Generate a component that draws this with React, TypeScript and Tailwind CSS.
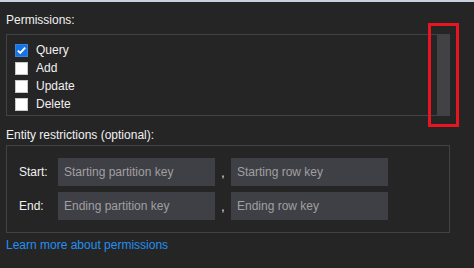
import * as React from 'react'

const PERMISSIONS = [
  { label: 'Query', checked: true },
  { label: 'Add', checked: false },
  { label: 'Update', checked: false },
  { label: 'Delete', checked: false },
]

function Check({ checked }: { checked: boolean }) {
  if (checked) {
    return (
      <span className="flex h-[13px] w-[13px] items-center justify-center border border-[#3f7fd8] bg-[#1473e6]">
        <svg viewBox="0 0 11 11" className="h-[11px] w-[11px]" aria-hidden="true">
          <path d="M1.8 5.6 L4.3 8 L9.2 2.6" fill="none" stroke="#ffffff" strokeWidth="1.9" />
        </svg>
      </span>
    )
  }
  return <span className="h-[13px] w-[13px] border border-[#c8c8c8] bg-white" />
}

function KeyInput({ placeholder }: { placeholder: string }) {
  return (
    <input
      placeholder={placeholder}
      className="h-[28px] w-[157px] bg-[#3f3f46] px-[6px] text-[12px] text-[#e0e0e0] outline-none placeholder:text-[#a0a0a0]"
    />
  )
}

export default function App() {
  return (
    <div
      className="relative h-[268px] w-[474px] overflow-hidden bg-[#252526] text-[12px] text-[#f1f1f1]"
      style={{ fontFamily: '"Liberation Sans", Arial, sans-serif' }}
    >
      <div className="h-[2px] bg-[#c9d1e0]" />
      <div className="px-[6px]">
        <div className="pb-[6px] pt-[10px] leading-4">Permissions:</div>
        <div className="flex h-[82px] w-[444px] border border-r-0 border-[#434346]">
          <div className="flex flex-1 flex-col pl-[8px] pt-[6px]">
            {PERMISSIONS.map((p) => (
              <label key={p.label} className="flex h-[18px] items-center gap-[8px] leading-4">
                <Check checked={p.checked} />
                <span>{p.label}</span>
              </label>
            ))}
          </div>
          <div className="-my-px w-[13px] bg-[#424245]" />
        </div>

        <div className="pb-[2px] pt-[11px] leading-4">Entity restrictions (optional):</div>
        <div className="flex w-[444px] flex-col gap-[6px] border border-[#434346] px-[12px] py-[12px]">
          <div className="flex items-center">
            <span className="w-[39px]">Start:</span>
            <KeyInput placeholder="Starting partition key" />
            <span className="w-[16px] self-end pb-[5px] text-center leading-4">,</span>
            <KeyInput placeholder="Starting row key" />
          </div>
          <div className="flex items-center">
            <span className="w-[39px]">End:</span>
            <KeyInput placeholder="Ending partition key" />
            <span className="w-[16px] self-end pb-[5px] text-center leading-4">,</span>
            <KeyInput placeholder="Ending row key" />
          </div>
        </div>

        <a href="#" className="mt-[4px] block w-fit leading-4 text-[#2390f0]">
          Learn more about permissions
        </a>
      </div>

      <div className="absolute left-[428px] top-[23px] h-[104px] w-[31px] border-[3px] border-[#e8141f]" />
    </div>
  )
}
